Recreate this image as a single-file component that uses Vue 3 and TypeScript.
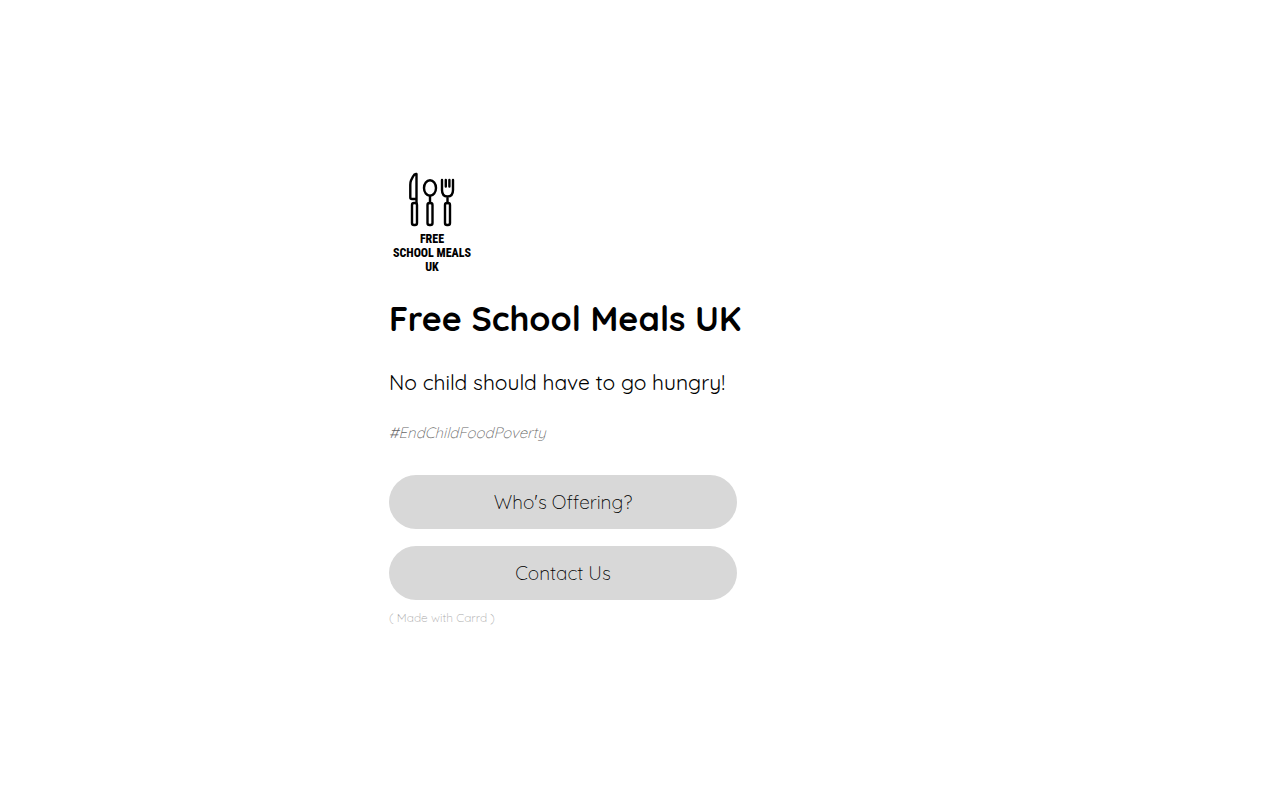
<script setup lang="ts">
interface Action {
  label: string
  href: string
}

const actions: Action[] = [
  { label: "Who's Offering?", href: '#offering' },
  { label: 'Contact Us', href: '#contact' },
]
</script>

<template>
  <div class="page">
    <main class="content">
      <svg class="logo" viewBox="0 0 86 102" role="img" aria-label="Free School Meals UK">
        <g class="cutlery">
          <path d="M27.500 30V1Q25.500 0.500 24 3.500L22 7.500Q21.300 9 21.300 12V24.500Q21.300 26 23 26H27.500" />
          <rect x="23" y="30" width="5" height="22" rx="2" />
          <ellipse cx="41" cy="15" rx="6" ry="7.800" />
          <path d="M41 23V30" />
          <rect x="38.500" y="30" width="5" height="22" rx="2" />
          <path d="M53 7V17Q53 23.500 58.500 23.500Q64 23.500 64 17V7M58.500 23.500V30" />
          <path d="M56.800 7V13.500M60.400 7V13.500" />
          <rect x="56" y="30" width="5" height="22" rx="2" />
        </g>
        <g class="wordmark">
          <text x="43" y="70">FREE</text>
          <text x="43" y="84">SCHOOL MEALS</text>
          <text x="43" y="98">UK</text>
        </g>
      </svg>
      <h1>Free School Meals UK</h1>
      <p class="tagline">No child should have to go hungry!</p>
      <p class="hashtag">#EndChildFoodPoverty</p>
      <nav class="actions">
        <a v-for="action in actions" :key="action.label" :href="action.href">{{ action.label }}</a>
      </nav>
      <footer><a href="#carrd">( Made with Carrd )</a></footer>
    </main>
  </div>
</template>

<style>
body {
  margin: 0;
  background: #fff;
}
</style>

<style scoped>
.page {
  box-sizing: border-box;
  min-height: 100vh;
  padding: 32px;
  display: flex;
  align-items: center;
  justify-content: center;
  font-family: Quicksand, Lato, sans-serif;
  color: #000;
}
.content {
  width: 100%;
  max-width: 502px;
}
.logo {
  display: block;
  width: 86px;
  overflow: visible;
}
.cutlery {
  fill: none;
  stroke: #000;
  stroke-width: 2.4;
  stroke-linecap: round;
  stroke-linejoin: round;
}
.wordmark {
  font: 800 12px "Roboto Condensed", sans-serif;
  text-anchor: middle;
}
h1 {
  margin: 20px 0 0;
  font-size: 34px;
  line-height: 48px;
  font-weight: 700;
}
.tagline {
  margin: 24px 0 0;
  font-size: 21px;
  line-height: 30px;
}
.hashtag {
  margin: 26px 0 0;
  font-size: 15px;
  line-height: 20px;
  font-style: italic;
  font-weight: 300;
  color: #666;
}
.actions {
  display: flex;
  flex-direction: column;
  gap: 17px;
  max-width: 348px;
  margin-top: 32px;
}
.actions a {
  border-radius: 27px;
  background: #d8d8d8;
  color: #000;
  font-size: 19px;
  line-height: 54px;
  font-weight: 300;
  text-align: center;
  text-decoration: none;
}
footer {
  margin-top: 8px;
  font-size: 12px;
  line-height: 20px;
  font-weight: 300;
}
footer a {
  color: #aaa;
  text-decoration: none;
}
</style>
